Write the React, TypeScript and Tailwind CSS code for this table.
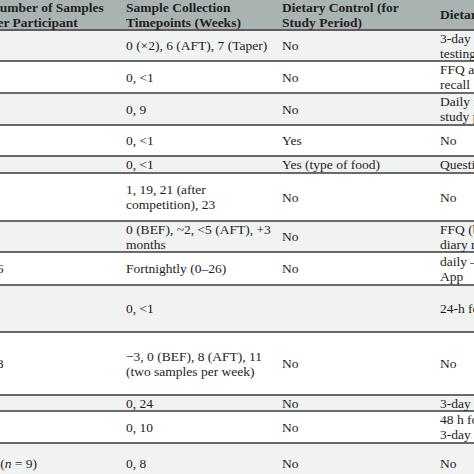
const rows: { h: string; bg: string; c1: string; c2: string[]; c3: string; c4: string[] }[] = [
  { h: 'h-[31px]', bg: 'bg-[#f1f2f2]', c1: '', c2: ['0 (×2), 6 (AFT), 7 (Taper)'], c3: 'No', c4: ['3-day food diary', 'testing days'] },
  { h: 'h-[32px]', bg: 'bg-white', c1: '', c2: ['0, <1'], c3: 'No', c4: ['FFQ and 24-h', 'recall'] },
  { h: 'h-[32px]', bg: 'bg-[#f1f2f2]', c1: '', c2: ['0, 9'], c3: 'No', c4: ['Daily food log', 'study period'] },
  { h: 'h-[31px]', bg: 'bg-white', c1: '', c2: ['0, <1'], c3: 'Yes', c4: ['No'] },
  { h: 'h-[17px]', bg: 'bg-[#f1f2f2]', c1: '', c2: ['0, <1'], c3: 'Yes (type of food)', c4: ['Questionnaire'] },
  { h: 'h-[48px]', bg: 'bg-white', c1: '', c2: ['1, 19, 21 (after', 'competition), 23'], c3: 'No', c4: ['No'] },
  { h: 'h-[31px]', bg: 'bg-[#f1f2f2]', c1: '', c2: ['0 (BEF), ~2, <5 (AFT), +3', 'months'], c3: 'No', c4: ['FFQ (baseline)', 'diary records'] },
  { h: 'h-[33px]', bg: 'bg-white', c1: '26', c2: ['Fortnightly (0–26)'], c3: 'No', c4: ['daily – food', 'App'] },
  { h: 'h-[47px]', bg: 'bg-[#f1f2f2]', c1: '', c2: ['0, <1'], c3: '', c4: ['24-h food recall'] },
  { h: 'h-[63px]', bg: 'bg-white', c1: '48', c2: ['−3, 0 (BEF), 8 (AFT), 11', '(two samples per week)'], c3: 'No', c4: ['No'] },
  { h: 'h-[16px]', bg: 'bg-[#f1f2f2]', c1: '', c2: ['0, 24'], c3: 'No', c4: ['3-day food diary'] },
  { h: 'h-[32px]', bg: 'bg-white', c1: '', c2: ['0, 10'], c3: 'No', c4: ['48 h food recall', '3-day diary'] },
  { h: 'h-[40px]', bg: 'bg-[#f1f2f2]', c1: '2 (', c2: ['0, 8'], c3: 'No', c4: ['No'] },
];

function Lines({ items }: { items: string[] }) {
  return (
    <div>
      {items.map((t, i) => (
        <div key={i} className="whitespace-nowrap">{t}</div>
      ))}
    </div>
  );
}

export default function App() {
  return (
    <div
      className="w-[474px] h-[474px] overflow-hidden bg-white text-[13.5px] leading-[15px] text-[#1d1d1d]"
      style={{ fontFamily: '"Liberation Serif", "Times New Roman", serif' }}
    >
      <div className="-ml-[16px] w-[620px]">
        {/* header */}
        <div className="flex h-[31px] bg-[#a9b4b2] border-b-2 border-[#5e5e5e] font-bold text-[#222]">
          <div className="w-[136px] pl-[6px] flex items-center">
            <Lines items={['Number of Samples', 'per Participant']} />
          </div>
          <div className="w-[156px] pl-[6px] flex items-center">
            <Lines items={['Sample Collection', 'Timepoints (Weeks)']} />
          </div>
          <div className="w-[158px] pl-[6px] flex items-center">
            <Lines items={['Dietary Control (for', 'Study Period)']} />
          </div>
          <div className="flex-1 pl-[6px] flex items-center whitespace-nowrap">Dietary Assessment</div>
        </div>

        {rows.map((r, i) => (
          <div key={i} className={`flex ${r.h} ${r.bg} border-b-2 border-[#6a6a6a]`}>
            <div className="w-[136px] pl-[6px] flex items-center whitespace-nowrap">
              {r.c1 === '2 (' ? (
                <span>2 (<i>n</i> = 9)</span>
              ) : (
                r.c1
              )}
            </div>
            <div className="w-[156px] pl-[6px] flex items-center">
              <Lines items={r.c2} />
            </div>
            <div className="w-[158px] pl-[6px] flex items-center whitespace-nowrap">{r.c3}</div>
            <div className="flex-1 pl-[6px] flex items-center">
              <Lines items={r.c4} />
            </div>
          </div>
        ))}
      </div>
    </div>
  );
}
